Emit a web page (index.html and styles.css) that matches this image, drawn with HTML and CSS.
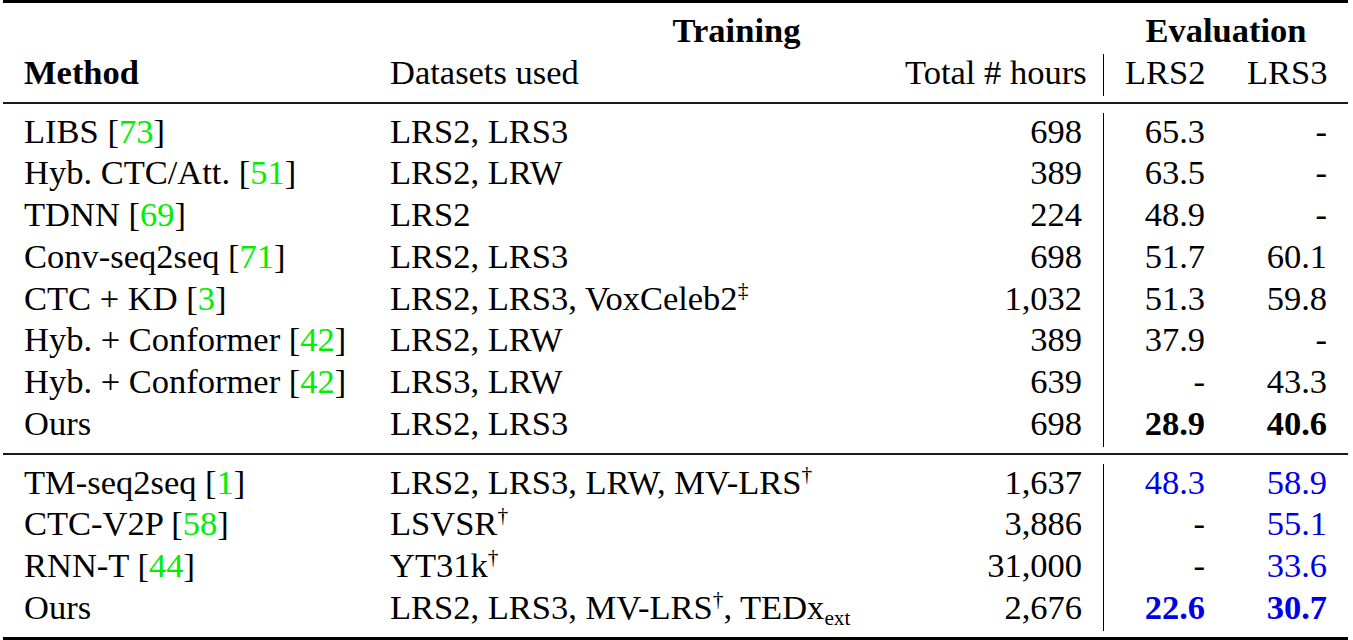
FILE: index.html
```html
<!DOCTYPE html>
<html>
<head>
<meta charset="utf-8">
<link rel="stylesheet" href="styles.css">
</head>
<body>
<div class="tbl">
  <div class="c"></div>
  <div class="c ctr b">Training</div>
  <div class="c ctr b">Evaluation</div>

  <div class="c b">Method</div>
  <div class="c">Datasets used</div>
  <div class="c r bar">Total # hours</div>
  <div class="c r">LRS2</div>
  <div class="c r">LRS3</div>

  <div class="rule"></div>

  <div class="c">LIBS [<span class="cite">73</span>]</div>
  <div class="c">LRS2, LRS3</div>
  <div class="c r bar">698</div>
  <div class="c r">65.3</div>
  <div class="c r">-</div>

  <div class="c">Hyb. CTC/Att. [<span class="cite">51</span>]</div>
  <div class="c">LRS2, LRW</div>
  <div class="c r bar">389</div>
  <div class="c r">63.5</div>
  <div class="c r">-</div>

  <div class="c">TDNN [<span class="cite">69</span>]</div>
  <div class="c">LRS2</div>
  <div class="c r bar">224</div>
  <div class="c r">48.9</div>
  <div class="c r">-</div>

  <div class="c">Conv-seq2seq [<span class="cite">71</span>]</div>
  <div class="c">LRS2, LRS3</div>
  <div class="c r bar">698</div>
  <div class="c r">51.7</div>
  <div class="c r">60.1</div>

  <div class="c">CTC + KD [<span class="cite">3</span>]</div>
  <div class="c">LRS2, LRS3, VoxCeleb2<sup>‡</sup></div>
  <div class="c r bar">1,032</div>
  <div class="c r">51.3</div>
  <div class="c r">59.8</div>

  <div class="c">Hyb. + Conformer [<span class="cite">42</span>]</div>
  <div class="c">LRS2, LRW</div>
  <div class="c r bar">389</div>
  <div class="c r">37.9</div>
  <div class="c r">-</div>

  <div class="c">Hyb. + Conformer [<span class="cite">42</span>]</div>
  <div class="c">LRS3, LRW</div>
  <div class="c r bar">639</div>
  <div class="c r">-</div>
  <div class="c r">43.3</div>

  <div class="c">Ours</div>
  <div class="c">LRS2, LRS3</div>
  <div class="c r bar">698</div>
  <div class="c r b">28.9</div>
  <div class="c r b">40.6</div>

  <div class="rule"></div>

  <div class="c">TM-seq2seq [<span class="cite">1</span>]</div>
  <div class="c">LRS2, LRS3, LRW, MV-LRS<sup>†</sup></div>
  <div class="c r bar">1,637</div>
  <div class="c r blue">48.3</div>
  <div class="c r blue">58.9</div>

  <div class="c">CTC-V2P [<span class="cite">58</span>]</div>
  <div class="c">LSVSR<sup>†</sup></div>
  <div class="c r bar">3,886</div>
  <div class="c r">-</div>
  <div class="c r blue">55.1</div>

  <div class="c">RNN-T [<span class="cite">44</span>]</div>
  <div class="c">YT31k<sup>†</sup></div>
  <div class="c r bar">31,000</div>
  <div class="c r">-</div>
  <div class="c r blue">33.6</div>

  <div class="c">Ours</div>
  <div class="c">LRS2, LRS3, MV-LRS<sup>†</sup>, TEDx<sub>ext</sub></div>
  <div class="c r bar">2,676</div>
  <div class="c r b blue">22.6</div>
  <div class="c r b blue">30.7</div>
</div>
</body>
</html>
```
FILE: styles.css
```css
html, body {
  margin: 0;
  padding: 0;
  background: #fff;
}

.tbl {
  display: grid;
  grid-template-columns: 366px 515px 220px 122px 122px;
  width: 1345px;
  margin-left: 3px;
  border-top: 3px solid #000;
  border-bottom: 3px solid #000;
  padding: 9px 0 6px;
  font-family: "Liberation Serif", "Times New Roman", serif;
  font-size: 34.5px;
  line-height: 37.75px;
  color: #000;
}

.c {
  padding: 0 21px 4px;
  white-space: nowrap;
}

.r {
  text-align: right;
}

.ctr {
  grid-column: span 2;
  text-align: center;
}

.b {
  font-weight: bold;
}

.bar {
  border-right: 1px solid #000;
}

.rule {
  grid-column: 1 / -1;
  height: 2px;
  background: #1a1a1a;
  margin: 6px 0 9px;
}

.cite {
  color: #00ee00;
}

.blue {
  color: #0000e8;
}

sup, sub {
  font-size: 0.62em;
  line-height: 0;
}

sup {
  vertical-align: 0.62em;
}

sub {
  vertical-align: -0.28em;
}
```
